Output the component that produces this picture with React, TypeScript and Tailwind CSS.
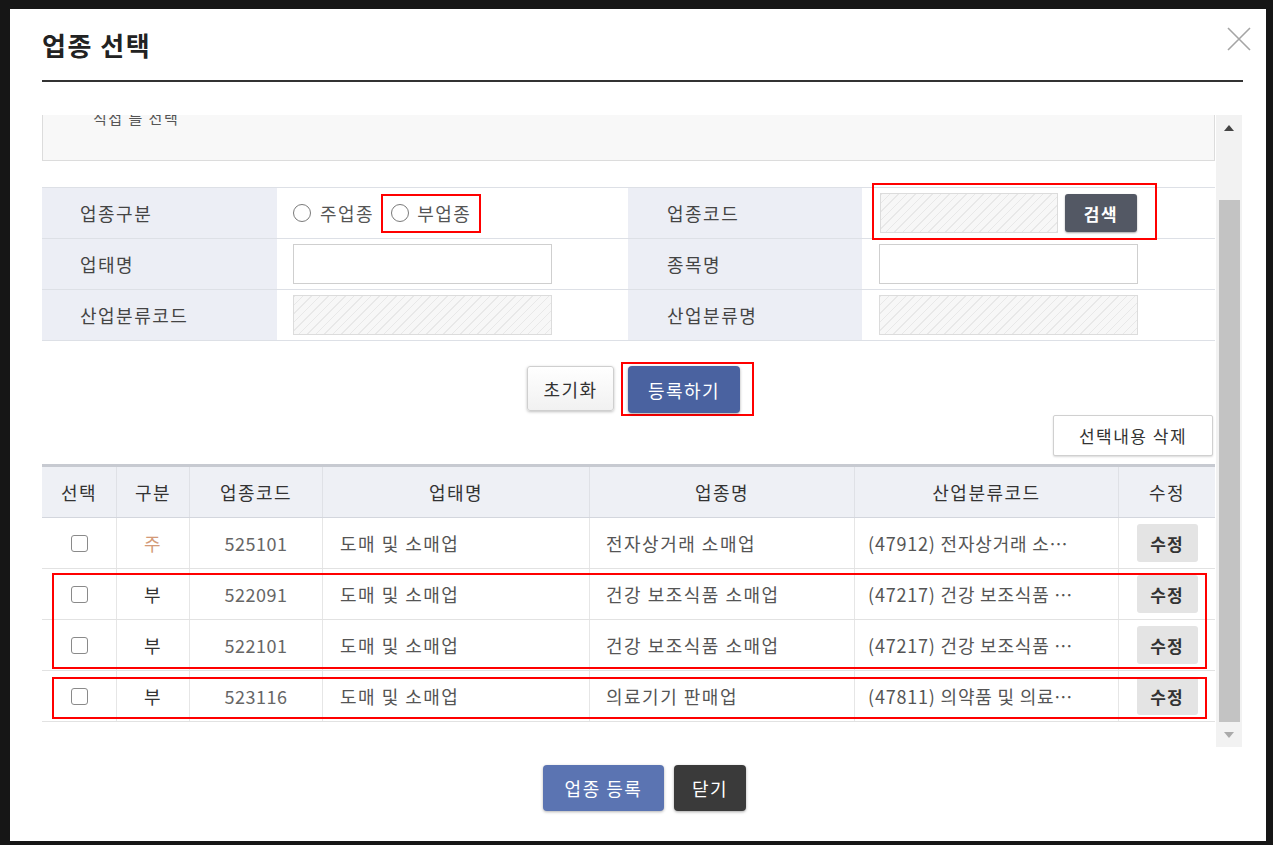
import React from 'react';

const hatch =
  'border border-[#dcdcdc] bg-[#f4f4f4] bg-[image:repeating-linear-gradient(135deg,#e8e8e8_0px,#e8e8e8_1px,#f7f7f7_1px,#f7f7f7_6px)]';

const rows = [
  { kind: '주', code: '525101', biz: '도매 및 소매업', item: '전자상거래 소매업', ind: '(47912) 전자상거래 소…' },
  { kind: '부', code: '522091', biz: '도매 및 소매업', item: '건강 보조식품 소매업', ind: '(47217) 건강 보조식품 …' },
  { kind: '부', code: '522101', biz: '도매 및 소매업', item: '건강 보조식품 소매업', ind: '(47217) 건강 보조식품 …' },
  { kind: '부', code: '523116', biz: '도매 및 소매업', item: '의료기기 판매업', ind: '(47811) 의약품 및 의료…' },
];

function Radio() {
  return <span className="inline-block w-[18px] h-[18px] rounded-full border-[1.5px] border-[#7a7a7a] bg-white" />;
}

function Checkbox() {
  return <span className="inline-block w-[17px] h-[17px] rounded-[3px] border-[1.5px] border-[#8a8a8a] bg-white" />;
}

export default function App() {
  return (
    <div className="w-[1280px] h-[845px] bg-white font-['Noto_Sans_CJK_KR',sans-serif] tracking-[1.5px] text-[#444]">
      <div className="relative w-[1273px] h-[845px] border-l-[10px] border-t-[9px] border-r-[7px] border-b-[4px] border-[#161616] bg-white pl-[32px] pr-[23px]">
        {/* close */}
        <svg className="absolute right-[15px] top-[18px]" width="24" height="24" viewBox="0 0 24 24">
          <path d="M1 1 L23 23 M23 1 L1 23" stroke="#a5a5a5" strokeWidth="1.6" fill="none" />
        </svg>

        {/* title */}
        <div className="h-[71px] flex items-center border-b-2 border-[#333] box-content">
          <h1 className="text-[26px] font-bold text-[#222] leading-none tracking-[1.5px]">업종 선택</h1>
        </div>

        {/* scroll area */}
        <div className="mt-[33px] h-[632px] flex">
          <div className="w-[1173px] h-full overflow-hidden">
            {/* notice box, scrolled so its first line is cut */}
            <div className="-mt-[24px] h-[70px] border border-[#dcdcdc] bg-[#f8f8f8] pl-[50px] pt-[17px]">
              <p className="text-[15px] leading-[18px] text-[#555]">직접 를 선택</p>
            </div>

            {/* form table */}
            <div className="mt-[26px] grid grid-cols-[235px_351px_234px_353px] border-t border-[#dde0e6] text-[18px] leading-none">
              <div className="h-[51px] border-b border-[#dde0e6] bg-[#eceef5] flex items-center pl-[38px]">업종구분</div>
              <div className="h-[51px] border-b border-[#dde0e6] flex items-center pl-[16px]">
                <Radio />
                <span className="ml-[9px] text-[#555]">주업종</span>
                <span className="ml-[7px] h-[39px] flex items-center px-[8px] border-2 border-[#f00]">
                  <Radio />
                  <span className="ml-[8px] text-[#555]">부업종</span>
                </span>
              </div>
              <div className="h-[51px] border-b border-[#dde0e6] bg-[#eceef5] flex items-center pl-[39px]">업종코드</div>
              <div className="relative h-[51px] border-b border-[#dde0e6] flex items-center pl-[18px]">
                <span className="absolute left-[10px] top-[-5px] w-[285px] h-[57px] border-2 border-[#f00]" />
                <span className={`w-[178px] h-[40px] ${hatch}`} />
                <button className="ml-[7px] w-[72px] h-[38px] rounded-[3px] bg-[#535864] text-white font-bold text-[17px] shadow-[0_1px_2px_rgba(0,0,0,0.35)]">
                  검색
                </button>
              </div>

              <div className="h-[51px] border-b border-[#dde0e6] bg-[#eceef5] flex items-center pl-[38px]">업태명</div>
              <div className="h-[51px] border-b border-[#dde0e6] flex items-center pl-[16px]">
                <span className="w-[259px] h-[40px] border border-[#cfcfcf] bg-white" />
              </div>
              <div className="h-[51px] border-b border-[#dde0e6] bg-[#eceef5] flex items-center pl-[39px]">종목명</div>
              <div className="h-[51px] border-b border-[#dde0e6] flex items-center pl-[17px]">
                <span className="w-[259px] h-[40px] border border-[#cfcfcf] bg-white" />
              </div>

              <div className="h-[51px] border-b border-[#dde0e6] bg-[#eceef5] flex items-center pl-[38px]">산업분류코드</div>
              <div className="h-[51px] border-b border-[#dde0e6] flex items-center pl-[16px]">
                <span className={`w-[259px] h-[40px] ${hatch}`} />
              </div>
              <div className="h-[51px] border-b border-[#dde0e6] bg-[#eceef5] flex items-center pl-[39px]">산업분류명</div>
              <div className="h-[51px] border-b border-[#dde0e6] flex items-center pl-[17px]">
                <span className={`w-[259px] h-[40px] ${hatch}`} />
              </div>
            </div>

            {/* action buttons */}
            <div className="mt-[21px] flex items-start justify-center pl-[24px] text-[18px] leading-none">
              <button className="mt-[4px] w-[87px] h-[45px] rounded-[3px] border border-[#cfcfcf] bg-[linear-gradient(#ffffff,#f1f1f1)] text-[#333] shadow-[0_1px_3px_rgba(0,0,0,0.25)]">
                초기화
              </button>
              <div className="ml-[7px] w-[133px] h-[54px] border-2 border-[#f00] pl-[5px] pt-[2px]">
                <button className="w-[112px] h-[47px] rounded-[4px] bg-[#4a62a0] text-white shadow-[0_1px_3px_rgba(0,0,0,0.35)]">
                  등록하기
                </button>
              </div>
            </div>
            <div className="-mt-[1px] flex justify-end pr-[2px]">
              <button className="w-[160px] h-[41px] rounded-[2px] border border-[#d0d0d0] bg-white text-[17px] leading-none text-[#333] shadow-[0_1px_2px_rgba(0,0,0,0.15)]">
                선택내용 삭제
              </button>
            </div>

            {/* grid */}
            <div className="mt-[8px] border-t-[3px] border-[#c7cad1] text-[18px] leading-none">
              <div className="grid grid-cols-[75px_73px_133px_267px_265px_264px_96px] h-[51px] bg-[#eef0f5] border-b border-[#d3d6dd] text-[#333]">
                {['선택', '구분', '업종코드', '업태명', '업종명', '산업분류코드', '수정'].map((h, i) => (
                  <div key={h} className={`flex items-center justify-center ${i < 6 ? 'border-r border-[#dfe1e6]' : ''}`}>
                    {h}
                  </div>
                ))}
              </div>
              <div className="relative">
                <span className="absolute left-[10px] top-[55px] w-[1155px] h-[96px] border-2 border-[#f00]" />
                <span className="absolute left-[10px] top-[159px] w-[1155px] h-[42px] border-2 border-[#f00]" />
                {rows.map((r) => (
                  <div
                    key={r.code}
                    className="grid grid-cols-[75px_73px_133px_267px_265px_264px_96px] h-[51px] border-b border-[#e2e2e2] text-[#555]"
                  >
                    <div className="flex items-center justify-center border-r border-[#e6e6e6]">
                      <Checkbox />
                    </div>
                    <div className={`flex items-center justify-center border-r border-[#e6e6e6] ${r.kind === '주' ? 'text-[#d39a78]' : 'text-[#333]'}`}>
                      {r.kind}
                    </div>
                    <div className="flex items-center justify-center border-r border-[#e6e6e6] tracking-[0.5px] text-[#666]">{r.code}</div>
                    <div className="flex items-center pl-[17px] border-r border-[#e6e6e6]">{r.biz}</div>
                    <div className="flex items-center pl-[16px] border-r border-[#e6e6e6]">{r.item}</div>
                    <div className="flex items-center pl-[13px] border-r border-[#e6e6e6] whitespace-nowrap overflow-hidden tracking-[0.8px]">{r.ind}</div>
                    <div className="flex items-center justify-center">
                      <button className="w-[61px] h-[38px] rounded-[3px] bg-[#e4e4e4] text-[#333] font-bold text-[17px] tracking-[1px]">
                        수정
                      </button>
                    </div>
                  </div>
                ))}
              </div>
            </div>
          </div>

          {/* scrollbar */}
          <div className="ml-[1px] w-[26px] h-full bg-[#f2f2f2] flex flex-col">
            <div className="h-[25px] flex items-center justify-center">
              <span className="w-0 h-0 border-l-[5px] border-r-[5px] border-b-[6px] border-l-transparent border-r-transparent border-b-[#444]" />
            </div>
            <div className="h-[60px]" />
            <div className="ml-[3px] mr-[2px] h-[522px] bg-[#c3c3c3]" />
            <div className="h-[25px] flex items-center justify-center">
              <span className="w-0 h-0 border-l-[5px] border-r-[5px] border-t-[6px] border-l-transparent border-r-transparent border-t-[#aaa]" />
            </div>
          </div>
        </div>

        {/* bottom buttons */}
        <div className="mt-[18px] flex justify-center gap-[10px] pl-[4px] text-[18px] leading-none">
          <button className="w-[121px] h-[46px] rounded-[4px] bg-[#5b74b2] text-white shadow-[0_1px_3px_rgba(0,0,0,0.3)]">
            업종 등록
          </button>
          <button className="w-[72px] h-[46px] rounded-[4px] bg-[#3a3a3a] text-white shadow-[0_1px_3px_rgba(0,0,0,0.35)]">
            닫기
          </button>
        </div>
      </div>
    </div>
  );
}
